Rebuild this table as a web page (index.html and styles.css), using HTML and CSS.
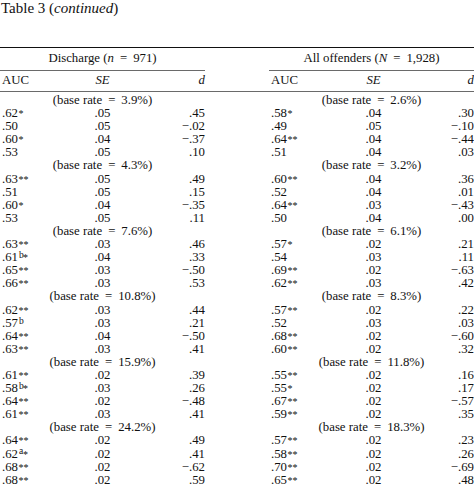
FILE: index.html
```html
<!DOCTYPE html>
<html lang="en">
<head>
<meta charset="utf-8">
<title>Table 3 (continued)</title>
<link rel="stylesheet" href="styles.css">
</head>
<body>
<div class="page">
  <div class="caption">Table 3 (<i>continued</i>)</div>
  <table class="tbl">
    <colgroup>
      <col class="c-auc-l"><col class="c-se"><col class="c-d-l"><col class="c-gap"><col class="c-auc-r"><col class="c-se-r"><col class="c-d-r">
    </colgroup>
    <thead>
      <tr class="grp">
        <th colspan="3" class="grp-cell">Discharge (<i>n</i><span class="eq">=</span>971)</th>
        <th class="gap"></th>
        <th colspan="3" class="grp-cell">All offenders (<i>N</i><span class="eq">=</span>1,928)</th>
      </tr>
      <tr class="hdr">
        <th class="auc">AUC</th><th class="se"><i>SE</i></th><th class="d"><i>d</i></th>
        <th class="gap"></th>
        <th class="auc">AUC</th><th class="se"><i>SE</i></th><th class="d"><i>d</i></th>
      </tr>
    </thead>
    <tbody>
      <tr class="first br"><td colspan="3">(base rate<span class="eq">=</span>3.9%)</td><td class="gap"></td><td colspan="3">(base rate<span class="eq">=</span>2.6%)</td></tr>
      <tr><td class="auc">.62<span class="st"><span class="sp">*</span></span></td><td class="se">.05</td><td class="d">.45</td><td class="gap"></td><td class="auc">.58<span class="st"><span class="sp">*</span></span></td><td class="se">.04</td><td class="d">.30</td></tr>
      <tr><td class="auc">.50</td><td class="se">.05</td><td class="d">−.02</td><td class="gap"></td><td class="auc">.49</td><td class="se">.05</td><td class="d">−.10</td></tr>
      <tr><td class="auc">.60<span class="st"><span class="sp">*</span></span></td><td class="se">.04</td><td class="d">−.37</td><td class="gap"></td><td class="auc">.64<span class="st"><span class="sp">**</span></span></td><td class="se">.04</td><td class="d">−.44</td></tr>
      <tr><td class="auc">.53</td><td class="se">.05</td><td class="d">.10</td><td class="gap"></td><td class="auc">.51</td><td class="se">.04</td><td class="d">.03</td></tr>

      <tr class="br"><td colspan="3">(base rate<span class="eq">=</span>4.3%)</td><td class="gap"></td><td colspan="3">(base rate<span class="eq">=</span>3.2%)</td></tr>
      <tr><td class="auc">.63<span class="st"><span class="sp">**</span></span></td><td class="se">.05</td><td class="d">.49</td><td class="gap"></td><td class="auc">.60<span class="st"><span class="sp">**</span></span></td><td class="se">.04</td><td class="d">.36</td></tr>
      <tr><td class="auc">.51</td><td class="se">.05</td><td class="d">.15</td><td class="gap"></td><td class="auc">.52</td><td class="se">.04</td><td class="d">.01</td></tr>
      <tr><td class="auc">.60<span class="st"><span class="sp">*</span></span></td><td class="se">.04</td><td class="d">−.35</td><td class="gap"></td><td class="auc">.64<span class="st"><span class="sp">**</span></span></td><td class="se">.03</td><td class="d">−.43</td></tr>
      <tr><td class="auc">.53</td><td class="se">.05</td><td class="d">.11</td><td class="gap"></td><td class="auc">.50</td><td class="se">.04</td><td class="d">.00</td></tr>

      <tr class="br"><td colspan="3">(base rate<span class="eq">=</span>7.6%)</td><td class="gap"></td><td colspan="3">(base rate<span class="eq">=</span>6.1%)</td></tr>
      <tr><td class="auc">.63<span class="st"><span class="sp">**</span><span class="sb">b</span></span></td><td class="se">.03</td><td class="d">.46</td><td class="gap"></td><td class="auc">.57<span class="st"><span class="sp">*</span></span></td><td class="se">.02</td><td class="d">.21</td></tr>
      <tr><td class="auc">.61<span class="st"><span class="sp sp-after">*</span></span></td><td class="se">.04</td><td class="d">.33</td><td class="gap"></td><td class="auc">.54</td><td class="se">.03</td><td class="d">.11</td></tr>
      <tr><td class="auc">.65<span class="st"><span class="sp">**</span></span></td><td class="se">.03</td><td class="d">−.50</td><td class="gap"></td><td class="auc">.69<span class="st"><span class="sp">**</span></span></td><td class="se">.02</td><td class="d">−.63</td></tr>
      <tr><td class="auc">.66<span class="st"><span class="sp">**</span></span></td><td class="se">.03</td><td class="d">.53</td><td class="gap"></td><td class="auc">.62<span class="st"><span class="sp">**</span></span></td><td class="se">.03</td><td class="d">.42</td></tr>

      <tr class="br"><td colspan="3">(base rate<span class="eq">=</span>10.8%)</td><td class="gap"></td><td colspan="3">(base rate<span class="eq">=</span>8.3%)</td></tr>
      <tr><td class="auc">.62<span class="st"><span class="sp">**</span><span class="sb">b</span></span></td><td class="se">.03</td><td class="d">.44</td><td class="gap"></td><td class="auc">.57<span class="st"><span class="sp">**</span></span></td><td class="se">.02</td><td class="d">.22</td></tr>
      <tr><td class="auc">.57</td><td class="se">.03</td><td class="d">.21</td><td class="gap"></td><td class="auc">.52</td><td class="se">.03</td><td class="d">.03</td></tr>
      <tr><td class="auc">.64<span class="st"><span class="sp">**</span></span></td><td class="se">.04</td><td class="d">−.50</td><td class="gap"></td><td class="auc">.68<span class="st"><span class="sp">**</span></span></td><td class="se">.02</td><td class="d">−.60</td></tr>
      <tr><td class="auc">.63<span class="st"><span class="sp">**</span></span></td><td class="se">.03</td><td class="d">.41</td><td class="gap"></td><td class="auc">.60<span class="st"><span class="sp">**</span></span></td><td class="se">.02</td><td class="d">.32</td></tr>

      <tr class="br"><td colspan="3">(base rate<span class="eq">=</span>15.9%)</td><td class="gap"></td><td colspan="3">(base rate<span class="eq">=</span>11.8%)</td></tr>
      <tr><td class="auc">.61<span class="st"><span class="sp">**</span><span class="sb">b</span></span></td><td class="se">.02</td><td class="d">.39</td><td class="gap"></td><td class="auc">.55<span class="st"><span class="sp">**</span></span></td><td class="se">.02</td><td class="d">.16</td></tr>
      <tr><td class="auc">.58<span class="st"><span class="sp sp-after">*</span></span></td><td class="se">.03</td><td class="d">.26</td><td class="gap"></td><td class="auc">.55<span class="st"><span class="sp">*</span></span></td><td class="se">.02</td><td class="d">.17</td></tr>
      <tr><td class="auc">.64<span class="st"><span class="sp">**</span></span></td><td class="se">.02</td><td class="d">−.48</td><td class="gap"></td><td class="auc">.67<span class="st"><span class="sp">**</span></span></td><td class="se">.02</td><td class="d">−.57</td></tr>
      <tr><td class="auc">.61<span class="st"><span class="sp">**</span></span></td><td class="se">.03</td><td class="d">.41</td><td class="gap"></td><td class="auc">.59<span class="st"><span class="sp">**</span></span></td><td class="se">.02</td><td class="d">.35</td></tr>

      <tr class="br"><td colspan="3">(base rate<span class="eq">=</span>24.2%)</td><td class="gap"></td><td colspan="3">(base rate<span class="eq">=</span>18.3%)</td></tr>
      <tr><td class="auc">.64<span class="st"><span class="sp">**</span><span class="sb">a</span></span></td><td class="se">.02</td><td class="d">.49</td><td class="gap"></td><td class="auc">.57<span class="st"><span class="sp">**</span></span></td><td class="se">.02</td><td class="d">.23</td></tr>
      <tr><td class="auc">.62<span class="st"><span class="sp sp-after">*</span></span></td><td class="se">.02</td><td class="d">.41</td><td class="gap"></td><td class="auc">.58<span class="st"><span class="sp">**</span></span></td><td class="se">.02</td><td class="d">.26</td></tr>
      <tr><td class="auc">.68<span class="st"><span class="sp">**</span></span></td><td class="se">.02</td><td class="d">−.62</td><td class="gap"></td><td class="auc">.70<span class="st"><span class="sp">**</span></span></td><td class="se">.02</td><td class="d">−.69</td></tr>
      <tr><td class="auc">.68<span class="st"><span class="sp">**</span></span></td><td class="se">.02</td><td class="d">.59</td><td class="gap"></td><td class="auc">.65<span class="st"><span class="sp">**</span></span></td><td class="se">.02</td><td class="d">.48</td></tr>
    </tbody>
  </table>
</div>
</body>
</html>
```
FILE: styles.css
```css
html, body {
  margin: 0;
  padding: 0;
  background: #ffffff;
}
body {
  width: 474px;
  height: 490px;
  overflow: hidden;
  font-family: "Liberation Serif", "Times New Roman", serif;
  color: #111111;
}
.page {
  width: 474px;
}
.caption {
  font-size: 15px;
  line-height: 17px;
  height: 47px;
  padding-left: 1px;
}
.tbl {
  width: 474px;
  table-layout: fixed;
  border-collapse: collapse;
  border-spacing: 0;
  font-size: 12.8px;
}
.c-auc-l { width: 68px; }
.c-se { width: 69px; }
.c-d-l { width: 68px; }
.c-gap { width: 64px; }
.c-auc-r { width: 70px; }
.c-se-r { width: 69px; }
.c-d-r { width: 66px; }

.tbl th, .tbl td {
  padding: 0;
  font-weight: normal;
  white-space: nowrap;
}
.grp th {
  border-top: 1.6px solid #111;
  height: 20px;
  line-height: 18px;
  padding-bottom: 2px;
  text-align: center;
  vertical-align: middle;
}
.grp .grp-cell {
  border-bottom: 1px solid #6a6a6a;
}
.grp .gap {
  border-bottom: none;
}
.hdr th {
  height: 18px;
  line-height: 16px;
  padding-bottom: 2px;
  vertical-align: middle;
  border-bottom: 1px solid #6a6a6a;
}
.eq {
  padding: 0 6px;
}
.auc {
  text-align: left;
  padding-left: 2px !important;
}
.se { text-align: center; }
.d { text-align: right; }
tbody td {
  height: 13.1px;
  line-height: 13.1px;
}
tbody .br td {
  text-align: center;
}
tbody .first td {
  padding-top: 2px;
}
.st {
  position: relative;
  display: inline-block;
  width: 10px;
}
.sp {
  position: absolute;
  left: 0.5px;
  top: -8px;
  font-size: 10px;
  line-height: 10px;
}
.sp-after {
  left: 5px;
}
.sb {
  position: absolute;
  left: 1px;
  top: 3px;
  font-size: 9.5px;
  line-height: 9px;
}
```
